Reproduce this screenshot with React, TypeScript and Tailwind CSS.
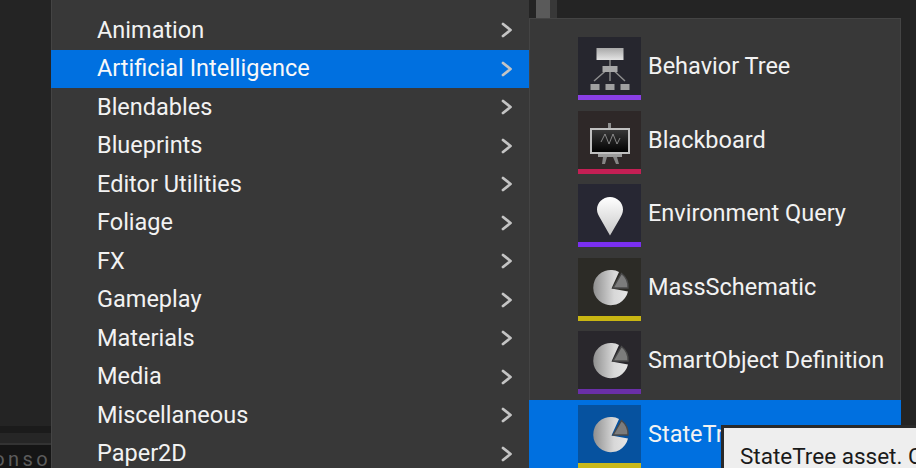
const categories = [
  "Animation",
  "Artificial Intelligence",
  "Blendables",
  "Blueprints",
  "Editor Utilities",
  "Foliage",
  "FX",
  "Gameplay",
  "Materials",
  "Media",
  "Miscellaneous",
  "Paper2D",
];

function Chevron() {
  return (
    <svg width="12" height="16" viewBox="0 0 12 16" fill="none" className="shrink-0">
      <path d="M2 2l7.5 6L2 14" stroke="#c4c4c4" strokeWidth="2.8" strokeLinecap="round" strokeLinejoin="round" />
    </svg>
  );
}

function TreeIcon() {
  return (
    <svg width="63" height="58" viewBox="0 0 63 58" className="block">
      <defs>
        <linearGradient id="treeFill" x1="0" y1="0" x2="0" y2="1">
          <stop offset="0" stopColor="#a8a8a8" />
          <stop offset="1" stopColor="#e4e4e4" />
        </linearGradient>
      </defs>
      <path d="M32 23v7M32 30L16 44M32 30v14M32 30l15 14" stroke="#8e8e8e" strokeWidth="1.4" fill="none" />
      <rect x="18.5" y="11" width="27" height="12" fill="url(#treeFill)" />
      <rect x="24.5" y="29" width="15" height="6" fill="#a8a8a8" />
      <rect x="12.5" y="47" width="9" height="6" fill="#a0a0a0" />
      <rect x="27.5" y="47" width="9" height="6" fill="#a0a0a0" />
      <rect x="42.5" y="47" width="9" height="6" fill="#a0a0a0" />
    </svg>
  );
}

function BoardIcon() {
  return (
    <svg width="63" height="58" viewBox="0 0 63 58" className="block">
      <defs>
        <linearGradient id="boardFill" x1="0" y1="0" x2="0" y2="1">
          <stop offset="0" stopColor="#3a3a3a" />
          <stop offset="1" stopColor="#000000" />
        </linearGradient>
      </defs>
      <rect x="30" y="12" width="3" height="5" fill="#8f8f8f" />
      <rect x="13" y="18" width="38" height="24" fill="url(#boardFill)" stroke="#c0c0c0" strokeWidth="2" />
      <path d="M23 31l4-8 4 10 4-10 4 10 3-6" stroke="#a0a0a0" strokeWidth="0.8" fill="none" />
      <rect x="20" y="43" width="24" height="3" fill="#9a9a9a" />
      <path d="M25 46h4l-2 7h-3zM35 46h4l2 7h-3z" fill="#858585" />
    </svg>
  );
}

function PinIcon() {
  return (
    <svg width="63" height="58" viewBox="0 0 63 58" className="block">
      <defs>
        <linearGradient id="pinFill" x1="0" y1="0" x2="0" y2="1">
          <stop offset="0" stopColor="#ffffff" />
          <stop offset="1" stopColor="#c8c8c8" />
        </linearGradient>
      </defs>
      <path d="M32 13c7.2 0 13 5.6 13 12.6 0 3.4-1.4 6.2-3.4 9.4L32 51.5 22.6 35c-2-3.2-3.6-6-3.6-9.4C19 18.6 24.8 13 32 13z" fill="url(#pinFill)" />
    </svg>
  );
}

function PieIcon({ id }: { id: string }) {
  return (
    <svg width="63" height="58" viewBox="0 0 63 58" className="block">
      <defs>
        <linearGradient id={id} x1="0" y1="0" x2="1" y2="0">
          <stop offset="0" stopColor="#8f8f8f" />
          <stop offset="0.6" stopColor="#d8d8d8" />
          <stop offset="1" stopColor="#e6e6e6" />
        </linearGradient>
      </defs>
      <path d="M33.5 30.5L50 33.5A17.6 17.6 0 1 1 41 14L33.5 30.5z" fill={`url(#${id})`} />
      <path d="M35 30L43.5 15.5A17 17 0 0 1 50 30z" fill="#7c7c7c" stroke="#4a4a4a" strokeWidth="1.4" />
    </svg>
  );
}

const assets = [
  { label: "Behavior Tree", tint: "bg-[#26262e]", bar: "bg-[#8a3fe6]", icon: <TreeIcon /> },
  { label: "Blackboard", tint: "bg-[#2e2828]", bar: "bg-[#c41f54]", icon: <BoardIcon /> },
  { label: "Environment Query", tint: "bg-[#272733]", bar: "bg-[#7a2ff0]", icon: <PinIcon /> },
  { label: "MassSchematic", tint: "bg-[#2c2b26]", bar: "bg-[#c9b612]", icon: <PieIcon id="pieA" /> },
  { label: "SmartObject Definition", tint: "bg-[#29272c]", bar: "bg-[#6a2fa8]", icon: <PieIcon id="pieB" /> },
  { label: "StateTree", tint: "bg-[#06529f]", bar: "bg-[#c9b81a]", icon: <PieIcon id="pieC" />, active: true },
];

export default function App() {
  return (
    <div className="flex h-[468px] w-[916px] overflow-hidden bg-[#242424] font-['Roboto',sans-serif] text-[#f2f2f2]">
      <div className="flex w-[51px] shrink-0 flex-col">
        <div className="flex-1" />
        <div className="h-[7px] bg-[#1b1b1b]" />
        <div className="h-[10px] bg-[#262626]" />
        <div className="h-[2px] bg-[#333333]" />
        <div className="flex h-[23px] justify-end overflow-hidden whitespace-nowrap bg-[#151515] text-[20px] leading-[28px] tracking-[3.4px] text-[#5c5c5c]">
          <span className="shrink-0">onso</span>
        </div>
      </div>

      <div className="w-[478px] shrink-0 border-l border-[#444444] bg-[#383838] pt-[11px]">
        {categories.map((name, i) => (
          <div
            key={name}
            className={`-ml-px flex h-[38.5px] items-center justify-between pl-[46px] pr-[16px] text-[23.5px] ${
              i === 1 ? "bg-[#0070e0] text-[#f8f8f8]" : ""
            }`}
          >
            <span>{name}</span>
            <Chevron />
          </div>
        ))}
      </div>

      <div className="relative flex-1">
        <div className="flex h-[18px]">
          <div className="ml-[7px] w-[14px] bg-[#5a5a5a]" />
          <div className="w-[7px] bg-[#383838]" />
        </div>
        <div className="h-[450px] w-[372px] border-x border-t border-[#444444] bg-[#383838] pt-[13px]">
          {assets.map((asset) => (
            <div
              key={asset.label}
              className={`-mx-px flex h-[73.5px] items-start pl-[49px] pt-[5px] ${asset.active ? "bg-[#0070e0]" : ""}`}
            >
              <div className={`h-[63px] w-[63px] shrink-0 ${asset.tint}`}>
                {asset.icon}
                <div className={`h-[5px] ${asset.bar}`} />
              </div>
              <span className="ml-[7px] mt-[10px] whitespace-nowrap text-[23.5px] leading-[38px]">
                {asset.label}
              </span>
            </div>
          ))}
        </div>
        <div className="absolute left-[192px] top-[425px] h-[60px] w-[220px] whitespace-nowrap border-[3px] border-[#2a2a2a] bg-[#eeeeee] pl-[16px] pt-[12px] text-[22.5px] text-[#1a1a1a]">
          StateTree asset. Co
        </div>
      </div>
    </div>
  );
}
